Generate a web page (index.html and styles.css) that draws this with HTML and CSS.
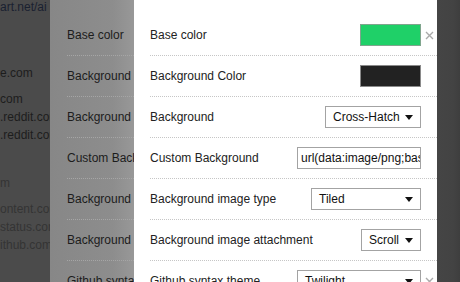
FILE: index.html
```html
<!DOCTYPE html>
<html>
<head>
<meta charset="utf-8">
<link rel="stylesheet" href="styles.css">
</head>
<body>
<div class="page-bg">
  <div class="dom dom-first">art.net/ai</div>
  <div class="dom gap-50">e.com</div>
  <div class="dom gap-8">com</div>
  <div class="dom">.reddit.com</div>
  <div class="dom">.reddit.com</div>
  <div class="dom dim gap-30">m</div>
  <div class="dom dim gap-8">ontent.com</div>
  <div class="dom dim">status.com</div>
  <div class="dom dim">ithub.com</div>
</div>
<div class="under-panel">
  <div class="urow">Base color</div>
  <div class="urow">Background Color</div>
  <div class="urow">Background</div>
  <div class="urow">Custom Background</div>
  <div class="urow">Background image type</div>
  <div class="urow">Background image attachment</div>
  <div class="urow">Github syntax theme</div>
</div>
<div class="modal">
  <div class="row">
    <span class="label">Base color</span>
    <span class="swatch swatch-green"></span>
    <span class="slot"><svg class="clear" width="9" height="9" viewBox="0 0 9 9"><path d="M1 1L8 8M8 1L1 8" stroke="#aaa" stroke-width="1.4" fill="none"/></svg></span>
  </div>
  <div class="row">
    <span class="label">Background Color</span>
    <span class="swatch swatch-dark"></span>
    <span class="slot"></span>
  </div>
  <div class="row">
    <span class="label">Background</span>
    <span class="select sel-cross"><span class="sel-text">Cross-Hatch</span><span class="caret"></span></span>
    <span class="slot"></span>
  </div>
  <div class="row">
    <span class="label">Custom Background</span>
    <span class="input">url(data:image/png;base64,iVBORw0KGgo</span>
    <span class="slot"></span>
  </div>
  <div class="row">
    <span class="label">Background image type</span>
    <span class="select sel-tiled"><span class="sel-text">Tiled</span><span class="caret"></span></span>
    <span class="slot"></span>
  </div>
  <div class="row">
    <span class="label">Background image attachment</span>
    <span class="select sel-scroll"><span class="sel-text">Scroll</span><span class="caret"></span></span>
    <span class="slot"></span>
  </div>
  <div class="row">
    <span class="label">Github syntax theme</span>
    <span class="select sel-twilight"><span class="sel-text">Twilight</span><span class="caret"></span></span>
    <span class="slot"><svg class="clear" width="9" height="9" viewBox="0 0 9 9"><path d="M1 1L8 8M8 1L1 8" stroke="#aaa" stroke-width="1.4" fill="none"/></svg></span>
  </div>
</div>
<div class="right-bg"></div>
</body>
</html>
```
FILE: styles.css
```css
html, body {
  margin: 0;
  padding: 0;
}
body {
  width: 460px;
  height: 282px;
  overflow: hidden;
  display: flex;
  font-family: "Liberation Sans", Arial, sans-serif;
  font-size: 12px;
  color: #222;
}
.page-bg {
  width: 50px;
  flex: none;
  background: #4b4b4b;
  overflow: hidden;
  white-space: nowrap;
}
.dom {
  line-height: 18px;
  height: 18px;
  color: #1d1d1d;
}
.dom-first {
  line-height: 14px;
  height: 14px;
  color: #1a2130;
}
.dom.dim {
  color: #343434;
}
.gap-50 { margin-top: 50px; }
.gap-30 { margin-top: 30px; }
.gap-8 { margin-top: 8px; }

.under-panel {
  width: 84px;
  flex: none;
  background: linear-gradient(to right, #878787, #8d8d8d 75%, #989898);
  overflow: hidden;
  white-space: nowrap;
  padding-top: 15px;
  box-sizing: border-box;
}
.urow {
  margin-left: 17px;
  height: 40px;
  line-height: 40px;
  border-bottom: 1px dotted #a6a6a6;
  color: #1c1c1c;
}

.modal {
  width: 303px;
  flex: none;
  background: #fff;
  padding-top: 15px;
  box-sizing: border-box;
  overflow: hidden;
}
.row {
  margin-left: 16px;
  height: 40px;
  border-bottom: 1px dotted #c6c6c6;
  display: flex;
  align-items: center;
  white-space: nowrap;
}
.label {
  flex: 1;
  color: #222;
}
.slot {
  width: 16px;
  flex: none;
  display: flex;
  justify-content: center;
  align-items: center;
}
.swatch {
  width: 61px;
  height: 22px;
  box-sizing: border-box;
  border: 1px solid #8f8f8f;
}
.swatch-green {
  background: #1fd068;
  border-color: #7fa58d;
}
.swatch-dark {
  background: #222;
  border-color: #8a8a8a;
}
.select {
  height: 22px;
  box-sizing: border-box;
  border: 1px solid #a3a3a3;
  background: #fff;
  display: flex;
  align-items: center;
  padding: 0 7px 0 7px;
  color: #111;
}
.sel-text {
  flex: 1;
}
.caret {
  width: 0;
  height: 0;
  border-left: 4px solid transparent;
  border-right: 4px solid transparent;
  border-top: 5px solid #111;
  margin-top: 1px;
}
.sel-cross { width: 96px; }
.sel-tiled { width: 110px; }
.sel-scroll { width: 60px; }
.sel-twilight { width: 124px; }
.input {
  width: 124px;
  height: 22px;
  box-sizing: border-box;
  border: 1px solid #a3a3a3;
  padding: 0 2px 0 3px;
  line-height: 20px;
  overflow: hidden;
  color: #111;
}
.clear {
  display: block;
}

.right-bg {
  flex: 1;
  background: linear-gradient(to right, #454545, #434343 70%, #3e3e3e);
}
```
